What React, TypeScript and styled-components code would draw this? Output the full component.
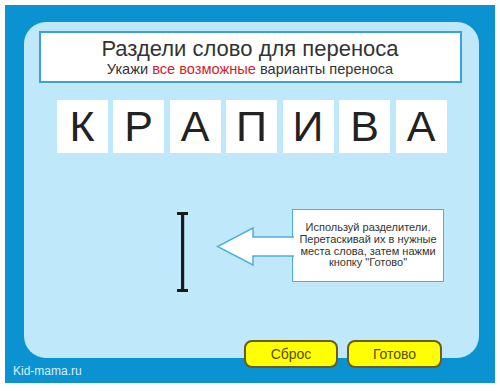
import styled, { createGlobalStyle } from 'styled-components';

const GlobalStyle = createGlobalStyle`
  html, body {
    margin: 0;
    background: #ffffff;
    font-family: "Liberation Sans", Arial, sans-serif;
  }
`;

const Frame = styled.div`
  background: #0b93d1;
  box-sizing: border-box;
  display: flex;
  flex-direction: column;
  height: 378px;
  margin: 5px;
  padding-top: 17px;
  width: 490px;
`;

const Panel = styled.section`
  background: #bfe9fb;
  border-radius: 22px;
  box-sizing: border-box;
  display: flex;
  flex-direction: column;
  height: 336px;
  margin: 0 16px 0 19px;
  padding-top: 9px;
`;

const TitleBox = styled.header`
  align-items: center;
  align-self: center;
  background: #ffffff;
  border: 2px solid #3aa2da;
  box-sizing: border-box;
  display: flex;
  flex-direction: column;
  height: 52px;
  justify-content: center;
  margin-left: -3px;
  width: 423px;
`;

const Title = styled.h1`
  color: #333333;
  font-size: 22px;
  font-weight: 400;
  line-height: 24px;
  margin: 0;
`;

const Subtitle = styled.p`
  color: #333333;
  font-size: 14.6px;
  line-height: 16px;
  margin: 0;
`;

const Accent = styled.span`
  color: #d2232c;
`;

const Word = styled.div`
  display: flex;
  gap: 5.5px;
  justify-content: center;
  margin-top: 17px;
`;

const Tile = styled.div`
  align-items: center;
  background: #ffffff;
  color: #222222;
  display: flex;
  font-size: 43px;
  height: 53px;
  justify-content: center;
  width: 51px;
`;

const Workspace = styled.div`
  align-items: flex-start;
  display: flex;
  gap: 28px;
  margin-top: 56px;
  padding-left: 153px;
`;

const Separator = styled.svg`
  display: block;
  margin-top: 3px;
`;

const Callout = styled.div`
  display: flex;
`;

const Arrow = styled.svg`
  display: block;
  margin-right: -2px;
  position: relative;
  z-index: 1;
`;

const HintBox = styled.div`
  align-items: center;
  background: #ffffff;
  border: 1.5px solid #4ab0de;
  box-sizing: border-box;
  color: #333333;
  display: flex;
  font-size: 11px;
  height: 73px;
  justify-content: center;
  line-height: 11.7px;
  text-align: center;
  width: 152px;
`;

const Footer = styled.footer`
  align-items: center;
  display: flex;
  height: 25px;
  justify-content: space-between;
  padding: 0 53px 0 8px;
`;

const Credit = styled.span`
  color: #d9effb;
  font-size: 12px;
`;

const Actions = styled.div`
  align-self: flex-start;
  display: flex;
  gap: 9px;
  margin-top: -18px;
`;

const ActionButton = styled.button`
  background: #ffff00;
  border: 2px solid #6b5c1c;
  border-radius: 8px;
  box-sizing: border-box;
  color: #5a4a10;
  font-family: "Liberation Sans", Arial, sans-serif;
  font-size: 14px;
  height: 28px;
  padding: 0;
  width: ${(p: { $w: number }) => p.$w}px;
`;

const letters = ['К', 'Р', 'А', 'П', 'И', 'В', 'А'];

export default function App() {
  return (
    <>
      <GlobalStyle />
      <Frame>
        <Panel>
          <TitleBox>
            <Title>Раздели слово для переноса</Title>
            <Subtitle>
              Укажи <Accent>все возможные</Accent> варианты переноса
            </Subtitle>
          </TitleBox>
          <Word>
            {letters.map((l, i) => (
              <Tile key={i}>{l}</Tile>
            ))}
          </Word>
          <Workspace>
            <Separator width="11" height="80" viewBox="0 0 11 80">
              <rect x="0" y="0" width="11" height="3" fill="#1a1a1a" />
              <rect x="4" y="0" width="3.2" height="80" fill="#1a1a1a" />
              <rect x="0" y="77" width="11" height="3" fill="#1a1a1a" />
            </Separator>
            <Callout>
              <Arrow width="78" height="73" viewBox="0 0 78 73">
                <path
                  d="M78 28 H37 V19 L1.5 37.5 L37 56 V47 H78"
                  fill="#ffffff"
                  stroke="#4ab0de"
                  strokeWidth="1.5"
                  strokeLinejoin="miter"
                />
              </Arrow>
              <HintBox>
                <span>
                  Используй разделители.
                  <br />
                  Перетаскивай их в нужные
                  <br />
                  места слова, затем нажми
                  <br />
                  кнопку "Готово"
                </span>
              </HintBox>
            </Callout>
          </Workspace>
        </Panel>
        <Footer>
          <Credit>Kid-mama.ru</Credit>
          <Actions>
            <ActionButton $w={94}>Сброс</ActionButton>
            <ActionButton $w={95}>Готово</ActionButton>
          </Actions>
        </Footer>
      </Frame>
    </>
  );
}
